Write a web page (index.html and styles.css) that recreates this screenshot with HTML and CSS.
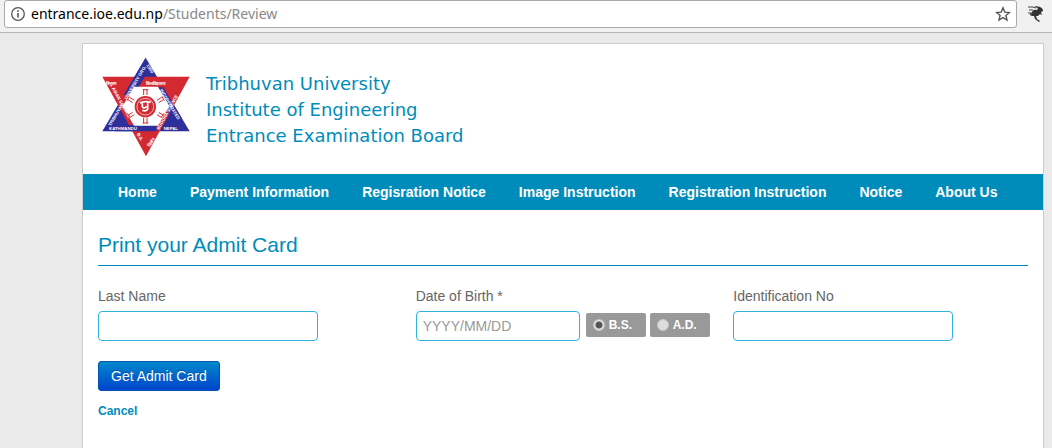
FILE: index.html
```
<!DOCTYPE html>
<html lang="en">
<head>
  <meta charset="UTF-8">
  <meta name="viewport" content="width=device-width, initial-scale=1.0">
  <title>Print your Admit Card</title>
  <link rel="stylesheet" href="styles.css">
</head>
<body>
  <!-- Address bar -->
  <div class="toolbar">
    <div class="address-bar">
      <svg class="icon" width="16" height="16" viewBox="0 0 16 16" aria-hidden="true">
        <circle cx="8" cy="8" r="6.3" fill="none" stroke="#555" stroke-width="1.3"/>
        <path d="M8 7v4.5M8 4.3v1.6" stroke="#555" stroke-width="1.6"/>
      </svg>
      <div class="url">entrance.ioe.edu.np<span>/Students/Review</span></div>
      <svg class="icon" width="16" height="16" viewBox="0 0 16 16" aria-hidden="true">
        <path d="M8 1.8l1.8 4.3 4.6.4-3.5 3 1.1 4.5L8 11.6 4 14l1.1-4.5-3.5-3 4.6-.4z" fill="none" stroke="#555" stroke-width="1.4"/>
      </svg>
    </div>
    <svg class="icon extension" width="18" height="18" viewBox="0 0 18 18" aria-hidden="true">
      <path d="M5 7Q6 4 10 5L11 3 8 2 9 1 13 2Q16 3 16 6L14 7 15 10 13 9 11 11 9 11 10 14 13 16 12 17 8 14 7 11 4 11z" fill="#333"/>
      <path d="M1 2h5l3 1M2 5h4M1 8h4l-2 2" fill="none" stroke="#444" stroke-width="1.2"/>
    </svg>
  </div>

  <div class="page">
    <header class="header">
      <svg class="logo" width="88" height="100" viewBox="21 21 264 300" role="img" aria-label="Tribhuvan University">
        <defs>
          <!-- crossings where the blue triangle runs on top -->
          <clipPath id="over">
            <path d="M65 20H152V135H65zM180 112H290V205H215zM60 200H185V260H60z"/>
          </clipPath>
        </defs>
        <path d="M152 23L284 244H22z" fill="#2f2f9b"/>
        <path d="M22 80H284L153 319z" fill="#d32a32"/>
        <path fill="#2f2f9b" fill-rule="evenodd" clip-path="url(#over)" d="M152 23L284 244H22zM152 76L63 225H241z"/>
        <path d="M117 110H189L223 168 189 227H117L83 168z" fill="#fff"/>
        <g class="logo-text">
          <text x="34" y="104">त्रिभुवन</text>
          <text x="153" y="104">विश्वविद्यालय</text>
          <text x="42" y="241">KATHMANDU</text>
          <text x="206" y="241">NEPAL</text>
          <text transform="translate(47 229) rotate(-59)">TRIBHUVAN</text>
          <text transform="translate(95 149) rotate(-59)">UNIVERSITY ORG.</text>
          <text transform="translate(154 46) rotate(59)">1959</text>
          <text transform="translate(194 120) rotate(59)">INCORPORATED</text>
          <text transform="translate(50 115) rotate(61)">ASIAN SCIENCE</text>
          <text transform="translate(125 252) rotate(61)">B.S.</text>
          <text transform="translate(166 291) rotate(-61)">विज्ञान</text>
          <text transform="translate(193 240) rotate(-61)">BUDDHA SCIENCE</text>
        </g>
        <g fill="none" stroke="#d32a32" stroke-width="3">
          <path d="M146 118v17M156 118v17M143 119h17M146 203v17M156 203v17M143 219h17"/>
          <path d="M104 142l14 9M99 149l14 9M103 139l-7 13M191 187l14 9M186 194l14 9M207 190l-8 12"/>
          <path d="M200 142l-14 9M205 149l-14 9M201 139l7 13M113 187l-14 9M118 194l-14 9M97 190l8 12"/>
        </g>
        <circle cx="151" cy="170" r="32" fill="#d32a32"/>
        <circle cx="151" cy="170" r="25" fill="none" stroke="#fff" stroke-width="2"/>
        <path d="M135 159Q150 152 167 157M142 160v8q0 6 6 6l7-4M158 158v20q-6 8-16 3" fill="none" stroke="#fff" stroke-width="5"/>
      </svg>
      <div class="site-name">
        Tribhuvan University<br>
        Institute of Engineering<br>
        Entrance Examination Board
      </div>
    </header>

    <nav class="menu">
      <a href="#">Home</a>
      <a href="#">Payment Information</a>
      <a href="#">Regisration Notice</a>
      <a href="#">Image Instruction</a>
      <a href="#">Registration Instruction</a>
      <a href="#">Notice</a>
      <a href="#">About Us</a>
    </nav>

    <main class="content">
      <h1>Print your Admit Card</h1>
      <form>
        <div class="fields">
          <div class="field">
            <label for="last-name">Last Name</label>
            <input type="text" class="text-box" id="last-name">
          </div>
          <div class="field">
            <label for="dob">Date of Birth *</label>
            <div class="dob-row">
              <input type="text" class="text-box date" id="dob" placeholder="YYYY/MM/DD">
              <div class="calendar">
                <label class="badge"><input type="radio" name="calendar" checked> B.S.</label>
                <label class="badge"><input type="radio" name="calendar"> A.D.</label>
              </div>
            </div>
          </div>
          <div class="field">
            <label for="id-no">Identification No</label>
            <input type="text" class="text-box" id="id-no">
          </div>
        </div>
        <button type="submit" class="submit">Get Admit Card</button>
        <a class="cancel" href="#">Cancel</a>
      </form>
    </main>
  </div>
</body>
</html>
```
FILE: styles.css
```
* {
  margin: 0;
  padding: 0;
  box-sizing: border-box;
}
body {
  font-family: "Liberation Sans", Arial, sans-serif;
  font-size: 14px;
  line-height: 20px;
  color: #666;
  background: #eaeaea;
  min-height: 100vh;
  display: flex;
  flex-direction: column;
}
.toolbar {
  display: flex;
  align-items: center;
  gap: 10px;
  padding: 0 7px 4px 4px;
  background: #f1f1f1;
  border-bottom: 1px solid #b6b6b6;
}
.address-bar {
  flex: 1;
  display: flex;
  align-items: center;
  gap: 5px;
  height: 28px;
  padding: 0 5px;
  background: #fff;
  border: 1px solid #a9a9a9;
  border-radius: 3px;
}
.icon {
  flex: none;
}
.url {
  flex: 1;
  font-family: "Noto Sans", sans-serif;
  color: #000;
}
.url span {
  color: #888;
}
.page {
  flex: 1;
  margin: 10px 8px 0 82px;
  background: #fff;
  border: 1px solid #ccc;
  border-bottom: 0;
}
.header {
  display: flex;
  align-items: flex-start;
  gap: 16px;
  height: 130px;
  padding: 13px 19px;
}
.logo {
  flex: none;
}
.logo-text {
  font-family: "Liberation Sans", sans-serif;
  font-size: 13px;
  font-weight: bold;
  fill: #fff;
}
.site-name {
  padding-top: 14px;
  font-family: "DejaVu Sans", sans-serif;
  font-size: 18px;
  line-height: 26px;
  color: #008cba;
}
.menu {
  display: flex;
  gap: 33px;
  padding: 8px 35px;
  background: #008cba;
}
.menu a {
  color: #fff;
  font-weight: bold;
  text-decoration: none;
  white-space: nowrap;
}
.content {
  padding: 20px 15px;
}
h1 {
  padding-bottom: 5px;
  margin-bottom: 20px;
  font-size: 21px;
  font-weight: normal;
  line-height: 30px;
  color: #008cba;
  border-bottom: 1px solid #008cba;
}
.fields {
  display: grid;
  grid-template-columns: repeat(3, 1fr);
  gap: 23px;
  margin-bottom: 20px;
}
.field > label {
  display: block;
  margin-bottom: 5px;
}
.text-box {
  display: block;
  width: 220px;
  height: 30px;
  padding: 4px 6px;
  font: inherit;
  color: #555;
  background: #fff;
  border: 1px solid #2fb4e0;
  border-radius: 4px;
}
.text-box::placeholder {
  color: #999;
}
.text-box.date {
  width: 164px;
}
.dob-row {
  display: flex;
  align-items: flex-start;
  gap: 6px;
}
.calendar {
  display: flex;
  gap: 4px;
  padding-top: 2px;
}
.badge {
  display: flex;
  align-items: center;
  gap: 4px;
  width: 60px;
  height: 24px;
  padding: 0 7px;
  font-size: 12px;
  font-weight: bold;
  color: #fff;
  background: #999;
  border-radius: 2px;
}
.badge input {
  appearance: none;
  flex: none;
  width: 12px;
  height: 12px;
  background: #ddd;
  border: 1px solid #c6c6c6;
  border-radius: 50%;
}
.badge input:checked {
  background: radial-gradient(circle, #555 3px, #e4e4e4 4px);
}
.submit {
  display: block;
  height: 30px;
  padding: 0 12px;
  font: inherit;
  color: #fff;
  background: linear-gradient(#0088cc, #0044cc);
  border: 1px solid #0055b3;
  border-radius: 3px;
  text-shadow: 0 -1px 0 rgba(0, 0, 0, 0.25);
  cursor: pointer;
}
.cancel {
  display: inline-block;
  margin-top: 10px;
  font-size: 12px;
  font-weight: bold;
  color: #008cba;
  text-decoration: none;
}
```
